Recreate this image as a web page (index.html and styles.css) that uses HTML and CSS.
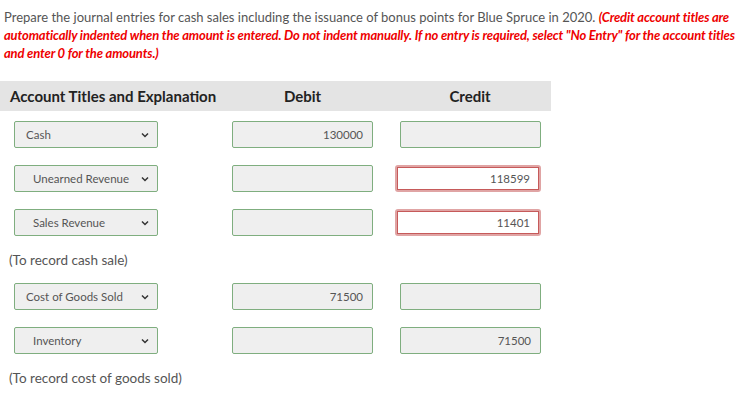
FILE: index.html
```html
<!DOCTYPE html>
<html>
<head>
<meta charset="utf-8">
<link rel="stylesheet" href="styles.css">
</head>
<body>
<div class="page">
  <p class="intro">Prepare the journal entries for cash sales including the issuance of bonus points for Blue Spruce in 2020. <span class="warn">(Credit account titles are</span><br><span class="warn">automatically indented when the amount is entered. Do not indent manually. If no entry is required, select "No Entry" for the account titles</span><br><span class="warn">and enter 0 for the amounts.)</span></p>

  <div class="table">
    <div class="head">
      <div class="h-acct">Account Titles and Explanation</div>
      <div class="h-debit">Debit</div>
      <div class="h-credit">Credit</div>
    </div>

    <div class="group first">
      <div class="row">
        <div class="select"><span class="label">Cash</span><svg class="chev" width="8" height="6" viewBox="0 0 8 6"><path d="M1 1.5 L4 4.5 L7 1.5" fill="none" stroke="#333" stroke-width="1.5"/></svg></div>
        <div class="debit"><div class="box">130000</div></div>
        <div class="credit"><div class="box"></div></div>
      </div>
      <div class="row">
        <div class="select"><span class="label indent">Unearned Revenue</span><svg class="chev" width="8" height="6" viewBox="0 0 8 6"><path d="M1 1.5 L4 4.5 L7 1.5" fill="none" stroke="#333" stroke-width="1.5"/></svg></div>
        <div class="debit"><div class="box"></div></div>
        <div class="credit"><div class="box bad"><div class="inner">118599</div></div></div>
      </div>
      <div class="row">
        <div class="select"><span class="label indent">Sales Revenue</span><svg class="chev" width="8" height="6" viewBox="0 0 8 6"><path d="M1 1.5 L4 4.5 L7 1.5" fill="none" stroke="#333" stroke-width="1.5"/></svg></div>
        <div class="debit"><div class="box"></div></div>
        <div class="credit"><div class="box bad"><div class="inner">11401</div></div></div>
      </div>
    </div>
    <div class="note">(To record cash sale)</div>

    <div class="group">
      <div class="row">
        <div class="select"><span class="label">Cost of Goods Sold</span><svg class="chev" width="8" height="6" viewBox="0 0 8 6"><path d="M1 1.5 L4 4.5 L7 1.5" fill="none" stroke="#333" stroke-width="1.5"/></svg></div>
        <div class="debit"><div class="box">71500</div></div>
        <div class="credit"><div class="box"></div></div>
      </div>
      <div class="row">
        <div class="select"><span class="label indent">Inventory</span><svg class="chev" width="8" height="6" viewBox="0 0 8 6"><path d="M1 1.5 L4 4.5 L7 1.5" fill="none" stroke="#333" stroke-width="1.5"/></svg></div>
        <div class="debit"><div class="box"></div></div>
        <div class="credit"><div class="box">71500</div></div>
      </div>
    </div>
    <div class="note">(To record cost of goods sold)</div>
  </div>
</div>
</body>
</html>
```

FILE: styles.css
```css
* { box-sizing: border-box; }
html, body { margin: 0; padding: 0; background: #fff; }
body { font-family: Lato, "Open Sans", sans-serif; color: #555; }
.page { padding: 8px 0 0 4px; }
.intro { margin: 0; font-size: 13px; line-height: 18px; color: #555; white-space: nowrap; }
.warn { color: #ee0000; font-weight: bold; font-style: italic; letter-spacing: -0.15px; }
.table { margin-top: 19px; margin-left: -4px; width: 551px; }
.head { display: flex; align-items: center; height: 30px; background: #e4e4e4; font-weight: bold; font-size: 15px; color: #222; }
.h-acct { width: 232px; padding-left: 10px; }
.h-debit { width: 141px; text-align: center; }
.h-credit { margin-left: 24px; width: 146px; text-align: center; }
.group { display: flex; flex-direction: column; gap: 17px; }
.group.first { margin-top: 10px; }
.row { display: flex; height: 27px; padding-left: 14px; }
.select { width: 144px; height: 27px; border: 1px solid #7fae7f; border-radius: 2px; background: #efefef; display: flex; align-items: center; justify-content: space-between; padding: 0 8px 0 11px; font-size: 11.5px; color: #555; }
.label.indent { padding-left: 7px; }
.chev { flex: none; }
.debit { margin-left: 74px; width: 141px; }
.credit { margin-left: 22px; width: 146px; display: flex; justify-content: flex-end; }
.box { width: 141px; height: 27px; border: 1px solid #7fae7f; border-radius: 2px; background: #efefef; font-size: 11.5px; color: #555; text-align: right; padding-right: 9px; line-height: 25px; }
.box.bad { width: 146px; border: 2px solid #e0a4a4; border-radius: 3px; background: #fff; padding: 0; }
.inner { height: 100%; border: 1px solid #c65a5a; padding-right: 8px; line-height: 21px; }
.note { font-size: 13.5px; color: #555; margin: 14px 0 13px 9px; line-height: 20px; }
```
